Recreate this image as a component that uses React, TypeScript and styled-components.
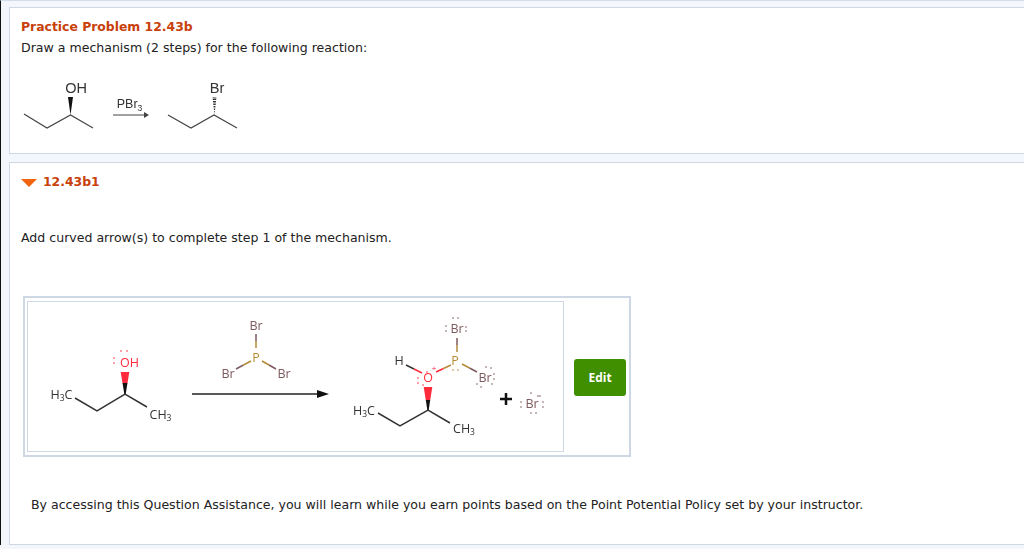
import React from "react";
import styled, { createGlobalStyle } from "styled-components";

const Global = createGlobalStyle`
  html, body { margin: 0; padding: 0; background: #f3f7fb; }
  #root { width: 1024px; height: 549px; overflow: hidden; }
`;

const Page = styled.div`
  box-sizing: border-box;
  width: 1024px;
  height: 545px;
  border-left: 1px solid #111;
  border-top: 1px solid #d3dde9;
  padding: 6px 0 0 8px;
  display: flex;
  flex-direction: column;
  gap: 8px;
  font-family: "DejaVu Sans", Verdana, sans-serif;
  font-size: 12.55px;
  color: #222;
`;

const Card = styled.section<{ $height: number }>`
  box-sizing: border-box;
  height: ${(p) => p.$height}px;
  flex: none;
  background: #fff;
  border: 1px solid #cfd9e5;
  border-right: none;
  padding-left: 11px;
  display: flex;
  flex-direction: column;
`;

const ProblemTitle = styled.h2`
  margin: 11px 0 0;
  font-size: 12.4px;
  line-height: 16px;
  font-weight: 700;
  color: #c8400a;
`;

const Body = styled.p<{ $top: number; $left?: number }>`
  margin: ${(p) => p.$top}px 0 0 ${(p) => p.$left ?? 0}px;
  font-size: 12.55px;
  line-height: 16px;
  color: #222;
`;

const Reaction = styled.svg`
  display: block;
  margin: 16px 0 0 -21px;
  width: 260px;
  height: 66px;
  filter: blur(0.4px);
`;

const StepHeader = styled.div`
  display: flex;
  align-items: center;
  gap: 6px;
  margin-top: 11px;
`;

const Caret = styled.span`
  width: 0;
  height: 0;
  border-left: 8px solid transparent;
  border-right: 8px solid transparent;
  border-top: 8px solid #f0640f;
  margin-top: 2px;
`;

const StepLabel = styled.h3`
  margin: 0;
  font-size: 12.4px;
  line-height: 16px;
  font-weight: 700;
  color: #c8400a;
`;

const Workspace = styled.div`
  box-sizing: border-box;
  width: 608px;
  height: 161px;
  margin: 50px 0 0 2px;
  border: 2px solid #cdd8e4;
  padding: 3px 0 0 2px;
  display: flex;
  align-items: flex-start;
  background: #fff;
`;

const Canvas = styled.div`
  box-sizing: border-box;
  width: 537px;
  height: 151px;
  border: 1px solid #cfd9e5;
  overflow: hidden;
  flex: none;
`;

const Mechanism = styled.svg`
  display: block;
  width: 535px;
  height: 149px;
  filter: blur(0.35px);
`;

const EditButton = styled.button`
  box-sizing: border-box;
  width: 52px;
  height: 37px;
  margin: 58px 0 0 10px;
  border: none;
  border-radius: 3px;
  background: #3f8f00;
  color: #fff;
  font-family: "Open Sans", sans-serif;
  font-size: 12px;
  font-weight: 700;
  padding: 0;
`;

const Label = styled.text<{ $color?: string; $size?: number }>`
  font-family: "Open Sans", sans-serif;
  font-size: ${(p) => p.$size ?? 12.5}px;
  fill: ${(p) => p.$color ?? "#333"};
  text-anchor: middle;
`;

const ArialLabel = styled.text<{ $size?: number }>`
  font-family: "Liberation Sans", Arial, sans-serif;
  font-size: ${(p) => p.$size ?? 14.5}px;
  fill: #333;
  text-anchor: middle;
`;

const BR = "#7d5a5e";
const GOLD = "#b58a35";
const RED = "#ff2a3c";
const INK = "#333";

const Bond = ({ d, c = INK }: { d: string; c?: string }) => (
  <path d={d} stroke={c} strokeWidth={1.5} fill="none" />
);

const Dots = ({ pts, c }: { pts: number[][]; c: string }) => (
  <>
    {pts.map(([x, y], i) => (
      <circle key={i} cx={x} cy={y} r={0.8} fill={c} />
    ))}
  </>
);

const Sub = styled.tspan`
  font-size: 8.5px;
`;

const Wedge = ({ x, top, apex, split }: { x: number; top: number; apex: number; split: number }) => {
  const frac = (split - top) / (apex - top);
  const w = 4.3 * (1 - frac) + 0.3;
  return (
    <>
      <polygon points={`${x - 4.3},${top} ${x + 4.3},${top} ${x + w},${split + 0.5} ${x - w},${split + 0.5}`} fill={RED} />
      <polygon points={`${x - w},${split} ${x + w},${split} ${x + 0.7},${apex} ${x - 0.7},${apex}`} fill="#111" />
    </>
  );
};

export default function App() {
  return (
    <>
      <Global />
      <Page>
        <Card $height={147}>
          <ProblemTitle>Practice Problem 12.43b</ProblemTitle>
          <Body $top={5}>Draw a mechanism (2 steps) for the following reaction:</Body>
          {/* viewBox is in page coordinates */}
          <Reaction viewBox="0 72 260 66">
            <ArialLabel x={76} y={93}>OH</ArialLabel>
            <polygon points="68,97 73,97 70.5,115" fill="#111" />
            <path d="M24 114 L47 128 L70.5 115 L93 128" stroke="#444" strokeWidth={1.2} fill="none" />
            <ArialLabel x={129.5} y={108} $size={12.5}>PBr<Sub dy={3}>3</Sub></ArialLabel>
            <path d="M113 115 H147" stroke="#444" strokeWidth={1.1} />
            <polygon points="149,115 144,112 144,118" fill="#444" />
            <ArialLabel x={217} y={93} $size={14.5}>Br</ArialLabel>
            <polygon points="212.5,97 216.5,97 214.5,115" fill="#333" />
            <path d="M211 98 H218 M211 100.5 H218 M211 103 H218 M211 105.5 H218 M211 108 H218 M211 110.5 H218 M211 113 H218" stroke="#fff" strokeWidth={1} />
            <path d="M168 115 L191 128 L214 115 L237 128" stroke="#444" strokeWidth={1.2} fill="none" />
          </Reaction>
        </Card>
        <Card $height={383}>
          <StepHeader>
            <Caret />
            <StepLabel>12.43b1</StepLabel>
          </StepHeader>
          <Body $top={40}>Add curved arrow(s) to complete step 1 of the mechanism.</Body>
          <Workspace>
            <Canvas>
              {/* viewBox is in page coordinates */}
              <Mechanism viewBox="28 302 535 149">
                {/* reactant */}
                <Label x={61.5} y={399}>H<Sub dy={2}>3</Sub><tspan dy={-2}>C</tspan></Label>
                <Bond d="M75 398 L97 411 L125 394 L147 407" />
                <Label x={160.5} y={419}>CH<Sub dy={2}>3</Sub></Label>
                <Wedge x={125} top={372} apex={394} split={383} />
                <Label x={129.5} y={367} $color={RED}>OH</Label>
                <Dots c={RED} pts={[[121, 351], [127, 351], [114, 358], [114, 363]]} />

                {/* reagent */}
                <Label x={256} y={330} $color={BR}>Br</Label>
                <Bond d="M256 334 V341" c={BR} />
                <Bond d="M256 341 V348" c={GOLD} />
                <Label x={256} y={362} $color={GOLD}>P</Label>
                <Label x={228} y={378} $color={BR}>Br</Label>
                <Label x={284} y={378} $color={BR}>Br</Label>
                <Bond d="M236 369 L243.5 365" c={BR} />
                <Bond d="M243.5 365 L251 361" c={GOLD} />
                <Bond d="M262 361 L269 365" c={GOLD} />
                <Bond d="M269 365 L276 369" c={BR} />

                {/* reaction arrow */}
                <path d="M192 394 H320" stroke="#222" strokeWidth={1.4} />
                <polygon points="329,394 317,390 317,398" fill="#111" />

                {/* product */}
                <Label x={364} y={415}>H<Sub dy={2}>3</Sub><tspan dy={-2}>C</tspan></Label>
                <Bond d="M378 413 L400 426 L428 410 L450 423" />
                <Label x={464} y={433}>CH<Sub dy={2}>3</Sub></Label>
                <Wedge x={428} top={387} apex={410} split={400} />
                <Label x={399} y={365}>H</Label>
                <Bond d="M406 365 L414 369" c={INK} />
                <Bond d="M414 369 L422 373" c={RED} />
                <Label x={428} y={381.5} $color={RED}>O</Label>
                <Label x={434} y={371} $color={RED} $size={8}>+</Label>
                <Dots c={RED} pts={[[418, 378], [418, 383], [423, 385], [427, 372]]} />
                <Bond d="M436 372 L443.5 368.5" c={RED} />
                <Bond d="M443.5 368.5 L451 365" c={GOLD} />
                <Label x={455} y={365} $color={GOLD}>P</Label>
                <Dots c={GOLD} pts={[[453, 370], [458, 370]]} />
                <Bond d="M457 338 V345" c={BR} />
                <Bond d="M457 345 V352" c={GOLD} />
                <Label x={457} y={333} $color={BR}>Br</Label>
                <Dots c={BR} pts={[[453, 318], [458, 318], [446, 326], [446, 331], [466, 327], [466, 331]]} />
                <Bond d="M462 364 L469.5 368" c={GOLD} />
                <Bond d="M469.5 368 L477 372" c={BR} />
                <Label x={485} y={382} $color={BR}>Br</Label>
                <Dots c={BR} pts={[[486, 367], [491, 368], [494, 374], [494, 379], [477, 384], [481, 387], [492, 384]]} />
                <path d="M500 399 H512 M506 393 V405" stroke="#111" strokeWidth={2.5} />
                <Label x={532} y={408} $color={BR}>Br</Label>
                <Dots c={BR} pts={[[531, 393], [521, 402], [521, 407], [543, 402], [543, 407], [531, 413], [536, 413]]} />
                <path d="M537 396 H541" stroke={BR} strokeWidth={0.9} />
              </Mechanism>
            </Canvas>
            <EditButton>Edit</EditButton>
          </Workspace>
          <Body $top={40} $left={10}>
            By accessing this Question Assistance, you will learn while you earn points based on the Point Potential Policy set by your instructor.
          </Body>
        </Card>
      </Page>
    </>
  );
}
